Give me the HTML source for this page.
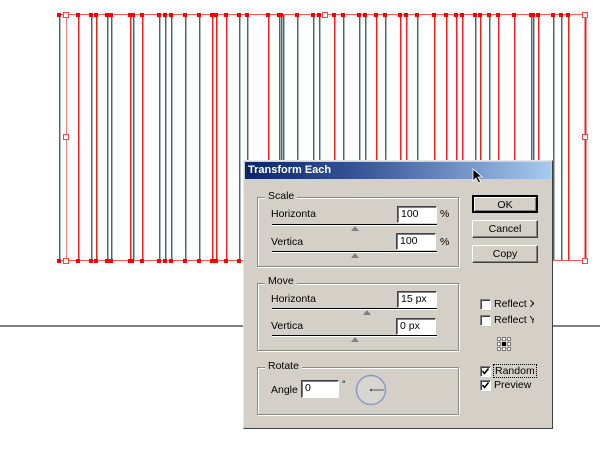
<!DOCTYPE html>
<html><head><meta charset="utf-8"><style>
*{margin:0;padding:0;box-sizing:border-box}
body{width:600px;height:450px;background:#fff;position:relative;overflow:hidden;font-family:"Liberation Sans",sans-serif;font-size:10.5px;color:#000}
.a{position:absolute}
.dlg{left:243px;top:160px;width:310px;height:269px;background:#d4d0c8;border:1px solid;border-color:#e8e6e0 #404040 #404040 #e8e6e0}
.title{left:1px;top:1px;width:306px;height:17px;background:linear-gradient(90deg,#0a246a,#3a5a9a 40%,#a6caf0);color:#fff;font-weight:bold;font-size:11px;line-height:17px;padding-left:3px}
.grp{border:1px solid #8c8a85;box-shadow:1px 1px 0 #fff inset,1px 1px 0 #fff}
.lbl{background:#d4d0c8;padding:0 3px}
.inp{background:#fff;border:1px solid;border-color:#404040 #fff #fff #404040;box-shadow:inset 1px 1px 0 #808080;padding-left:3px;line-height:15px}
.sl{height:2px;background:#000;border-bottom:1px solid #fff}
.th{width:0;height:0;border-left:4px solid transparent;border-right:4px solid transparent;border-bottom:5px solid #fff}
.btn{width:66px;height:18px;border:1px solid;border-color:#fff #404040 #404040 #fff;box-shadow:inset -1px -1px 0 #808080;text-align:center;line-height:16px}
.cb{width:11px;height:11px;background:#fff;border:1px solid;border-color:#808080 #fff #fff #808080;box-shadow:inset 1px 1px 0 #404040;font-size:9px;line-height:9px;text-align:center;font-weight:bold}
</style></head><body>
<svg class="a" style="left:0;top:0" width="600" height="450">
<line x1="0" y1="326" x2="600" y2="326" stroke="#555" stroke-width="1.5"/>
<g stroke-width="1" transform="translate(0.5,0)">
<g stroke="#a9baba" transform="translate(1,0)">
<path d="M59 15V261M78 15V261M91 15V261M96 15V261M107 15V261M111 15V261M130 15V261M133 15V261M142 15V261M159 15V261M165 15V261M171 15V261M185 15V261M199 15V261M212 15V261M216 15V261M226 15V261M239 15V261M247 15V261M268 15V261M279 15V261M281 15V261M283 15V261M297 15V261M313 15V261M319 15V261M334 15V261M343 15V261M359 15V261M365 15V261M376 15V261M385 15V261M400 15V261M406 15V261M417 15V261M434 15V261M446 15V261M456 15V261M462 15V261M475 15V261M480 15V261M489 15V261M498 15V261M514 15V261M531 15V261M533 15V261M538 15V261M553 15V261M561 15V261M568 15V261"/>
</g>
<g stroke="#f02020">
<path d="M59 15V261M78 15V261M91 15V261M96 15V261M107 15V261M111 15V261M130 15V261M133 15V261M142 15V261M159 15V261M165 15V261M171 15V261M185 15V261M199 15V261M212 15V261M216 15V261M226 15V261M239 15V261M247 15V261M268 15V261M279 15V261M281 15V261M283 15V261M297 15V261M313 15V261M319 15V261M334 15V261M343 15V261M359 15V261M365 15V261M376 15V261M385 15V261M400 15V261M406 15V261M417 15V261M434 15V261M446 15V261M456 15V261M462 15V261M475 15V261M480 15V261M489 15V261M498 15V261M514 15V261M531 15V261M533 15V261M538 15V261M553 15V261M561 15V261M568 15V261"/>
<path d="M585 15V261" stroke-width="2"/>
<path d="M66 15V261" stroke="#f08080"/>
</g>
<path d="M59 14.5H585M59 260.5H585" stroke="#f55"/>
</g>
<g fill="#f00">
<path d="M57 13h4v4h-4zM76 13h4v4h-4zM89 13h4v4h-4zM94 13h4v4h-4zM105 13h4v4h-4zM109 13h4v4h-4zM128 13h4v4h-4zM131 13h4v4h-4zM140 13h4v4h-4zM157 13h4v4h-4zM163 13h4v4h-4zM169 13h4v4h-4zM183 13h4v4h-4zM197 13h4v4h-4zM210 13h4v4h-4zM214 13h4v4h-4zM224 13h4v4h-4zM237 13h4v4h-4zM245 13h4v4h-4zM266 13h4v4h-4zM277 13h6v4h-6zM295 13h4v4h-4zM311 13h4v4h-4zM317 13h4v4h-4zM332 13h4v4h-4zM341 13h4v4h-4zM357 13h4v4h-4zM363 13h4v4h-4zM374 13h4v4h-4zM383 13h4v4h-4zM398 13h4v4h-4zM404 13h4v4h-4zM415 13h4v4h-4zM432 13h4v4h-4zM444 13h4v4h-4zM454 13h4v4h-4zM460 13h4v4h-4zM473 13h4v4h-4zM478 13h4v4h-4zM487 13h4v4h-4zM496 13h4v4h-4zM512 13h4v4h-4zM529 13h6v4h-6zM536 13h4v4h-4zM551 13h4v4h-4zM559 13h4v4h-4zM566 13h4v4h-4z"/>
<path d="M57 259h4v4h-4zM76 259h4v4h-4zM89 259h4v4h-4zM94 259h4v4h-4zM105 259h4v4h-4zM109 259h4v4h-4zM128 259h6v4h-6zM140 259h4v4h-4zM157 259h4v4h-4zM163 259h4v4h-4zM169 259h4v4h-4zM183 259h4v4h-4zM197 259h4v4h-4zM210 259h4v4h-4zM214 259h4v4h-4zM224 259h4v4h-4zM237 259h4v4h-4z"/>
</g>
<g fill="#fff" stroke="#f44" stroke-width="1">
<rect x="63.5" y="12.5" width="5" height="5"/><rect x="322.5" y="12.5" width="5" height="5"/><rect x="582.5" y="12.5" width="5" height="5"/>
<rect x="63.5" y="134.5" width="5" height="5"/><rect x="582.5" y="134.5" width="5" height="5"/>
<rect x="63.5" y="258.5" width="5" height="5"/><rect x="582.5" y="258.5" width="5" height="5"/>
</g>
</svg>

<div class="a dlg">
<div class="a title">Transform Each</div>
<svg class="a" style="left:228px;top:7px" width="12" height="17"><path d="M1 1L1 13L4 10L6.5 15L8.5 14L6 9L10 9Z" fill="#000" stroke="#fff" stroke-width="0.8"/></svg>

<div class="a grp" style="left:13px;top:36px;width:202px;height:70px"></div>
<div class="a lbl" style="left:21px;top:29px">Scale</div>
<div class="a" style="left:27px;top:47px">Horizonta</div>
<div class="a inp" style="left:153px;top:45px;width:40px;height:17px">100</div>
<div class="a" style="left:196px;top:47px">%</div>
<div class="a sl" style="left:28px;top:63px;width:165px"></div>
<div class="a th" style="left:107px;top:65px;border-bottom-color:#808080"></div>
<div class="a" style="left:27px;top:75px">Vertica</div>
<div class="a inp" style="left:152px;top:72px;width:40px;height:17px">100</div>
<div class="a" style="left:196px;top:75px">%</div>
<div class="a sl" style="left:28px;top:90px;width:165px"></div>
<div class="a th" style="left:107px;top:92px;border-bottom-color:#808080"></div>

<div class="a grp" style="left:13px;top:122px;width:202px;height:68px"></div>
<div class="a lbl" style="left:21px;top:114px">Move</div>
<div class="a" style="left:27px;top:132px">Horizonta</div>
<div class="a inp" style="left:153px;top:130px;width:40px;height:17px">15 px</div>
<div class="a sl" style="left:28px;top:147px;width:165px"></div>
<div class="a th" style="left:119px;top:149px;border-bottom-color:#808080"></div>
<div class="a" style="left:27px;top:159px">Vertica</div>
<div class="a inp" style="left:152px;top:157px;width:40px;height:17px">0 px</div>
<div class="a sl" style="left:28px;top:174px;width:165px"></div>
<div class="a th" style="left:107px;top:176px;border-bottom-color:#808080"></div>

<div class="a grp" style="left:13px;top:206px;width:202px;height:48px"></div>
<div class="a lbl" style="left:21px;top:199px">Rotate</div>
<div class="a" style="left:27px;top:223px">Angle</div>
<div class="a inp" style="left:57px;top:219px;width:38px;height:18px">0</div>
<div class="a" style="left:98px;top:218px;font-size:9px">°</div>
<svg class="a" style="left:111px;top:213px" width="32" height="32"><circle cx="16" cy="16" r="14.5" fill="#d8d6d0" stroke="#8a9ac8" stroke-width="1.5"/><path d="M16 16H29" stroke="#555"/><circle cx="16" cy="16" r="1.2" fill="#555"/></svg>

<div class="a btn" style="left:228px;top:34px;border:2px solid #000;box-shadow:inset 1px 1px 0 #fff,inset -1px -1px 0 #808080">OK</div>
<div class="a btn" style="left:228px;top:59px">Cancel</div>
<div class="a btn" style="left:228px;top:84px">Copy</div>

<div class="a cb" style="left:236px;top:138px"></div><div class="a" style="left:250px;top:137px;width:40px;overflow:hidden;white-space:nowrap">Reflect X</div>
<div class="a cb" style="left:236px;top:154px"></div><div class="a" style="left:250px;top:153px;width:40px;overflow:hidden;white-space:nowrap">Reflect Y</div>
<svg class="a" style="left:253px;top:176px" width="14" height="14"><g fill="#fff" stroke="#555" stroke-width="0.7"><rect x="0.5" y="0.5" width="3" height="3"/><rect x="5.5" y="0.5" width="3" height="3"/><rect x="10.5" y="0.5" width="3" height="3"/><rect x="0.5" y="5.5" width="3" height="3"/><rect x="10.5" y="5.5" width="3" height="3"/><rect x="0.5" y="10.5" width="3" height="3"/><rect x="5.5" y="10.5" width="3" height="3"/><rect x="10.5" y="10.5" width="3" height="3"/></g><rect x="5" y="5" width="4" height="4" fill="#000"/></svg>
<div class="a cb" style="left:236px;top:205px"><svg width="9" height="9" style="display:block"><path d="M1.5 4L3.5 6.5L7.5 1.5" stroke="#000" stroke-width="1.6" fill="none"/></svg></div><div class="a" style="left:249px;top:203px;border:1px dotted #000;padding:0 1px">Random</div>
<div class="a cb" style="left:236px;top:219px"><svg width="9" height="9" style="display:block"><path d="M1.5 4L3.5 6.5L7.5 1.5" stroke="#000" stroke-width="1.6" fill="none"/></svg></div><div class="a" style="left:250px;top:218px">Preview</div>
</div>
</body></html>
